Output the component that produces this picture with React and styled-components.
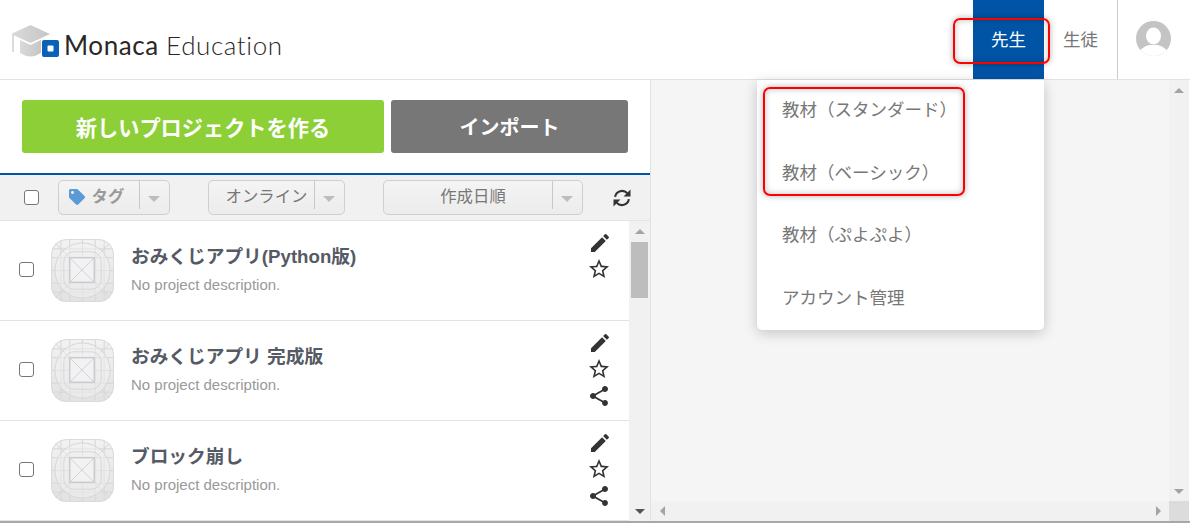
import styled, { createGlobalStyle } from 'styled-components'
import { MdEdit, MdStarBorder, MdShare } from 'react-icons/md'
import { FaTag } from 'react-icons/fa'

const GlobalStyle = createGlobalStyle`
  html, body { margin: 0; padding: 0; background: #fff; }
  body { font-family: "Liberation Sans", "Noto Sans CJK JP", sans-serif; }
  * { box-sizing: border-box; }
`

const Page = styled.div`
  position: relative;
  width: 1190px;
  height: 523px;
  overflow: hidden;
  display: grid;
  grid-template-rows: 80px 1fr;
  border-bottom: 2px solid #a8a8a8;
`

const Header = styled.header`
  display: flex;
  align-items: stretch;
  border-bottom: 1px solid #e2e2e2;
`
const Logo = styled.div`
  display: flex;
  align-items: flex-end;
  padding: 24px 0 0 11px;
  margin-right: auto;
  height: 57px;
  svg { display: block; flex: none; }
  svg + svg { margin-left: -8px; }
`
const LogoText = styled.div`
  font-family: Lato, sans-serif;
  font-size: 26px;
  line-height: 30px;
  letter-spacing: 0.6px;
  color: #2d2626;
  margin: 0 0 -3px 5px;
  white-space: nowrap;
  span { font-weight: 300; }
`
const Tab = styled.div`
  width: ${p => p.$width}px;
  display: flex;
  align-items: center;
  justify-content: center;
  font-size: 17.5px;
  padding-bottom: 2px;
  color: ${p => (p.$active ? '#fff' : '#777')};
  background: ${p => (p.$active ? '#0054a6' : 'transparent')};
`
const AvatarCell = styled.div`
  width: 73px;
  border-left: 1px solid #ccc;
  display: flex;
  justify-content: center;
  padding: 21px 2px 0 0;
`

const Body = styled.div`
  display: grid;
  grid-template-columns: 651px 1fr;
  min-height: 0;
`
const LeftPanel = styled.section`
  display: flex;
  flex-direction: column;
  border-right: 1px solid #e2e2e2;
  min-height: 0;
`
const Actions = styled.div`
  display: flex;
  gap: 7px;
  padding: 20px 22px;
  border-bottom: 2px solid #0054a6;
  height: 95px;
`
const BigButton = styled.div`
  width: ${p => p.$width}px;
  height: 53px;
  border-radius: 3px;
  background: ${p => p.$color};
  color: #fff;
  font-size: ${p => p.$size}px;
  font-weight: 700;
  display: flex;
  align-items: center;
  justify-content: center;
`
const Toolbar = styled.div`
  height: 46px;
  background: #f1f1f1;
  border-bottom: 1px solid #e4e4e4;
  display: flex;
  align-items: center;
  padding: 0 19px 0 24px;
`
const Check = styled.div`
  width: 15px;
  height: 15px;
  border: 1px solid #767676;
  border-radius: 3px;
  background: #fff;
  flex: none;
`
const Select = styled.div`
  width: ${p => p.$width}px;
  margin-left: ${p => p.$left}px;
  height: 35px;
  display: flex;
  border: 1px solid #cfcfcf;
  border-radius: 5px;
  background: linear-gradient(#f4f4f4, #ececec);
  color: ${p => (p.$muted ? '#9a9a9a' : '#777')};
  font-size: 16.4px;
  font-weight: ${p => (p.$muted ? 700 : 400)};
`
const SelectLabel = styled.div`
  flex: 1;
  display: flex;
  align-items: center;
  justify-content: center;
  gap: 7px;
  padding: 0 0 5px ${p => p.$pad}px;
  svg { color: #5b9bd5; margin-left: -9px; margin-top: 4px; }
`
const SelectCaret = styled.div`
  width: 30px;
  position: relative;
  display: flex;
  align-items: center;
  justify-content: center;
  padding-top: 3px;
  &::before {
    content: '';
    position: absolute;
    left: 0;
    top: 0;
    bottom: 5px;
    width: 1px;
    background: #c8c8c8;
  }
  &::after {
    content: '';
    border-left: 6px solid transparent;
    border-right: 6px solid transparent;
    border-top: 6px solid #bdbdbd;
  }
`
const RefreshIcon = styled.svg`
  margin-left: auto;
  width: 18px;
  height: 18px;
  color: #333;
`

const ListArea = styled.div`
  flex: 1;
  display: grid;
  grid-template-columns: 1fr 21px;
  min-height: 0;
`
const List = styled.div`
  min-width: 0;
`
const Row = styled.div`
  height: 100px;
  display: flex;
  align-items: center;
  padding-left: 19px;
  border-bottom: 1px solid #e2e2e2;
  ${Check} { margin-bottom: 3px; }
`
const Thumb = styled.svg`
  width: 63px;
  height: 63px;
  margin-left: 17px;
  flex: none;
`
const Info = styled.div`
  margin-left: 17px;
  flex: 1;
  padding-bottom: 3px;
`
const Title = styled.div`
  font-size: 18.7px;
  font-weight: 700;
  line-height: 26px;
  color: #555a64;
`
const Desc = styled.div`
  font-size: 15px;
  line-height: 18px;
  margin-top: 6px;
  color: #999;
`
const RowIcons = styled.div`
  width: 22px;
  margin-right: 19px;
  align-self: flex-start;
  padding-top: 9px;
  display: flex;
  flex-direction: column;
  align-items: center;
  gap: 3px;
  color: #333;
  svg { display: block; font-size: 24px; }
  svg:first-child { transform: translate(1px, 1px); }
`

const VBar = styled.div`
  display: flex;
  flex-direction: column;
  align-items: center;
  background: #f1f1f1;
  padding: 8px 0 7px;
`
const ArrowUp = styled.div`
  border-left: 5px solid transparent;
  border-right: 5px solid transparent;
  border-bottom: 5px solid ${p => p.$color || '#a3a3a3'};
  flex: none;
`
const ArrowDown = styled.div`
  border-left: 5px solid transparent;
  border-right: 5px solid transparent;
  border-top: 5px solid ${p => p.$color || '#a3a3a3'};
  flex: none;
`
const ArrowLeft = styled.div`
  border-top: 5px solid transparent;
  border-bottom: 5px solid transparent;
  border-right: 5px solid #a3a3a3;
`
const ArrowRight = styled.div`
  border-top: 5px solid transparent;
  border-bottom: 5px solid transparent;
  border-left: 5px solid #a3a3a3;
`
const VTrack = styled.div`
  flex: 1;
  width: 100%;
  padding: 8px 2px 0;
`
const VThumb = styled.div`
  height: 56px;
  background: #bdbdbd;
`

const RightPanel = styled.section`
  display: grid;
  grid-template-columns: 1fr 20px 1px;
  grid-template-rows: 1fr 20px;
  min-height: 0;
  background: #fff;
`
const Content = styled.div`
  background: #f5f5f5;
`
const HBar = styled.div`
  background: #f1f1f1;
  display: flex;
  align-items: center;
  justify-content: space-between;
  padding: 0 8px 0 9px;
  grid-column: 1;
`
const Corner = styled.div`
  background: #dcdcdc;
  grid-column: 2;
`
const Spacer = styled.div`
  grid-column: 3;
  grid-row: 1 / 3;
`

const Menu = styled.nav`
  position: absolute;
  left: 757px;
  top: 80px;
  width: 287px;
  height: 250px;
  background: #fff;
  border-radius: 0 0 5px 5px;
  box-shadow: 0 3px 14px rgba(0, 0, 0, 0.2);
  display: flex;
  flex-direction: column;
`
const MenuItem = styled.div`
  height: 62.5px;
  display: flex;
  align-items: center;
  padding: 0 0 5px 25px;
  font-size: 17.5px;
  color: #777;
  white-space: nowrap;
`
const Marker = styled.div`
  position: absolute;
  left: ${p => p.$x}px;
  top: ${p => p.$y}px;
  width: ${p => p.$w}px;
  height: ${p => p.$h}px;
  border: 2px solid #f00;
  border-radius: 7px;
  box-shadow: 0 0 6px rgba(0, 0, 0, 0.3), inset 0 0 6px rgba(0, 0, 0, 0.25);
  pointer-events: none;
`

const CapIcon = () => (
  <svg width="39" height="32" viewBox="0 0 39 32">
    <defs>
      <linearGradient id="cap" x1="0" x2="1">
        <stop offset="0" stopColor="#dadada" />
        <stop offset="1" stopColor="#c6c6c6" />
      </linearGradient>
    </defs>
    <path d="M19.5 0 L39 9 L19.5 18 L0 9 Z" fill="url(#cap)" />
    <path d="M9 15 L19.5 20 L30 15 L30 28 Q19.5 35 9 28 Z" fill="url(#cap)" />
    <rect x="1" y="10" width="2" height="17" fill="#dcdcdc" />
  </svg>
)
const BoxIcon = () => (
  <svg width="17" height="17" viewBox="0 0 17 17">
    <rect width="17" height="17" rx="2" fill="#0a62b8" />
    <rect x="5.5" y="5.5" width="6" height="6" rx="1" fill="#fff" />
  </svg>
)
const AvatarIcon = () => (
  <svg width="35" height="35" viewBox="0 0 35 35">
    <clipPath id="av"><circle cx="17.5" cy="17.5" r="17.5" /></clipPath>
    <g clipPath="url(#av)">
      <rect width="35" height="35" fill="#c4c4c4" />
      <ellipse cx="17.5" cy="15" rx="7.5" ry="8.5" fill="#fff" />
      <path d="M2 35 Q4 26 13 24 L22 24 Q31 26 33 35 Z" fill="#fff" />
    </g>
  </svg>
)
const Refresh = () => (
  <RefreshIcon viewBox="1 1 17 17">
    <path d="M3 8.5 A6.7 6.7 0 0 1 14.5 5" fill="none" stroke="currentColor" strokeWidth="2" />
    <path d="M17.5 1.5 V8 H11 Z" fill="currentColor" />
    <path d="M16 10.5 A6.7 6.7 0 0 1 4.5 14" fill="none" stroke="currentColor" strokeWidth="2" />
    <path d="M1.5 17.5 V11 H8 Z" fill="currentColor" />
  </RefreshIcon>
)
const ProjectThumb = () => (
  <Thumb viewBox="0 0 64 64">
    <defs>
      <linearGradient id="th" x1="0" y1="0" x2="0" y2="1">
        <stop offset="0" stopColor="#f2f2f2" />
        <stop offset="1" stopColor="#e2e2e2" />
      </linearGradient>
      <clipPath id="thc"><rect width="64" height="64" rx="16" /></clipPath>
    </defs>
    <g clipPath="url(#thc)">
      <rect width="64" height="64" fill="url(#th)" />
      <g fill="none" stroke="#d6d6d6" strokeWidth="1">
        <path d="M0 10H64M0 19H64M0 45H64M0 54H64M10 0V64M19 0V64M45 0V64M54 0V64M32 0V64M0 32H64" />
        <path d="M0 0L64 64M64 0L0 64" />
        <circle cx="32" cy="32" r="28" fill="#f2f2f2" fillOpacity="0.45" />
        <rect x="13" y="13" width="38" height="38" rx="10" />
      </g>
    </g>
    <rect x="0.5" y="0.5" width="63" height="63" rx="15.5" fill="none" stroke="#dadada" />
    <rect x="19" y="19" width="25" height="25" fill="#f2f2f2" stroke="#c8ccd2" strokeWidth="1.5" />
    <path d="M19 19L44 44M44 19L19 44" stroke="#d2d2d2" />
  </Thumb>
)

const projects = [
  { name: 'おみくじアプリ(Python版)', share: false },
  { name: 'おみくじアプリ 完成版', share: true },
  { name: 'ブロック崩し', share: true },
]
const menuItems = ['教材（スタンダード）', '教材（ベーシック）', '教材（ぷよぷよ）', 'アカウント管理']

const App = () => {
  return (
    <Page>
      <GlobalStyle />
      <Header>
        <Logo>
          <CapIcon />
          <BoxIcon />
          <LogoText>Monaca <span>Education</span></LogoText>
        </Logo>
        <Tab $active $width={71}>先生</Tab>
        <Tab $width={73}>生徒</Tab>
        <AvatarCell><div><AvatarIcon /></div></AvatarCell>
      </Header>
      <Body>
        <LeftPanel>
          <Actions>
            <BigButton $width={362} $size={21.2} $color="#8ccf37">新しいプロジェクトを作る</BigButton>
            <BigButton $width={237} $size={20} $color="#777">インポート</BigButton>
          </Actions>
          <Toolbar>
            <Check />
            <Select $width={112} $left={19} $muted>
              <SelectLabel $pad={4}><FaTag size={16} />タグ</SelectLabel>
              <SelectCaret />
            </Select>
            <Select $width={137} $left={38}>
              <SelectLabel $pad={10}>オンライン</SelectLabel>
              <SelectCaret />
            </Select>
            <Select $width={200} $left={38}>
              <SelectLabel $pad={10}>作成日順</SelectLabel>
              <SelectCaret />
            </Select>
            <Refresh />
          </Toolbar>
          <ListArea>
            <List>
              {projects.map(p => (
                <Row key={p.name}>
                  <Check />
                  <ProjectThumb />
                  <Info>
                    <Title>{p.name}</Title>
                    <Desc>No project description.</Desc>
                  </Info>
                  <RowIcons>
                    <MdEdit />
                    <MdStarBorder />
                    {p.share && <MdShare />}
                  </RowIcons>
                </Row>
              ))}
            </List>
            <VBar>
              <ArrowUp />
              <VTrack><VThumb /></VTrack>
              <ArrowDown $color="#555" />
            </VBar>
          </ListArea>
        </LeftPanel>
        <RightPanel>
          <Content />
          <VBar>
            <ArrowUp />
            <VTrack />
            <ArrowDown />
          </VBar>
          <Spacer />
          <HBar>
            <ArrowLeft />
            <ArrowRight />
          </HBar>
          <Corner />
        </RightPanel>
      </Body>
      <Menu>
        {menuItems.map(m => <MenuItem key={m}>{m}</MenuItem>)}
      </Menu>
      <Marker $x={953} $y={18} $w={97} $h={46} />
      <Marker $x={763} $y={87} $w={202} $h={109} />
    </Page>
  )
}

export default App
